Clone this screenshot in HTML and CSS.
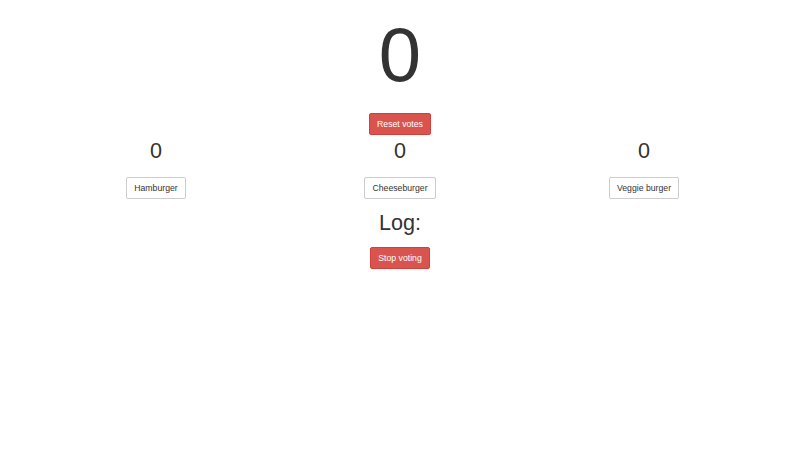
FILE: index.html
```html
<!DOCTYPE html>
<html>
<head>
<meta charset="utf-8">
<link rel="stylesheet" href="styles.css">
</head>
<body>
<div class="app">
  <div class="total">0</div>
  <button class="btn btn-danger reset">Reset votes</button>
  <div class="options">
    <div class="option">
      <div class="count">0</div>
      <button class="btn btn-default">Hamburger</button>
    </div>
    <div class="option">
      <div class="count">0</div>
      <button class="btn btn-default">Cheeseburger</button>
    </div>
    <div class="option">
      <div class="count">0</div>
      <button class="btn btn-default">Veggie burger</button>
    </div>
  </div>
  <div class="log">Log:</div>
  <button class="btn btn-danger stop">Stop voting</button>
</div>
</body>
</html>
```
FILE: styles.css
```css
html, body {
  margin: 0;
  padding: 0;
  background: #fff;
}
body {
  font-family: "Liberation Sans", Arial, sans-serif;
  color: #333;
}
.app {
  display: flex;
  flex-direction: column;
  align-items: center;
  padding-top: 17px;
}
.total {
  font-size: 76px;
  line-height: 76px;
  height: 76px;
}
.btn {
  font-family: "Liberation Sans", Arial, sans-serif;
  font-size: 8.7px;
  line-height: 13px;
  padding: 3.5px 7px;
  border: 1px solid #ccc;
  border-radius: 2px;
  background: #fff;
  color: #333;
  margin: 0;
  cursor: pointer;
}
.btn-danger {
  background: #d9534f;
  border-color: #d43f3a;
  color: #fff;
}
.reset {
  margin-top: 20px;
}
.options {
  width: 732px;
  display: grid;
  grid-template-columns: repeat(3, 1fr);
  margin-top: 5px;
}
.option {
  display: flex;
  flex-direction: column;
  align-items: center;
}
.count {
  font-size: 21.6px;
  line-height: 22px;
  height: 22px;
  margin-bottom: 15px;
}
.log {
  font-size: 21.6px;
  line-height: 22px;
  margin-top: 12.5px;
}
.stop {
  margin-top: 13.5px;
}
```
